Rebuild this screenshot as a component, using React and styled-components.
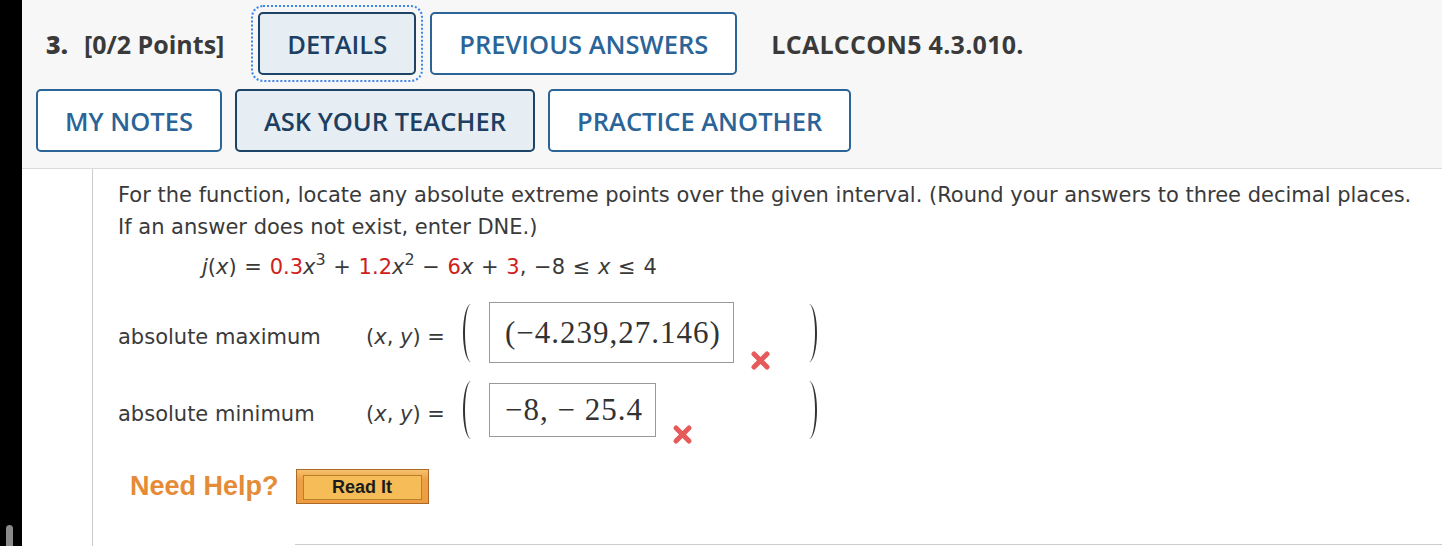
import React from "react";
import styled, { createGlobalStyle } from "styled-components";

const GlobalStyle = createGlobalStyle`
  html, body {
    margin: 0;
    padding: 0;
    height: 546px;
    overflow: hidden;
    background: #fff;
  }
`;

const Page = styled.div`
  display: flex;
  height: 546px;
`;

const Strip = styled.div`
  width: 22px;
  flex-shrink: 0;
  background: #000;
  display: flex;
  flex-direction: column;
  justify-content: flex-end;
`;

const Thumb = styled.div`
  width: 7px;
  height: 21px;
  margin-left: 6px;
  border-radius: 4px 4px 0 0;
  background: #8a8a8a;
`;

const Main = styled.div`
  flex: 1;
  display: flex;
  flex-direction: column;
  min-width: 0;
`;

const Header = styled.div`
  background: #f7f7f7;
  border-bottom: 1px solid #dcdcdc;
  padding: 12px 0 16px 14px;
  font-family: "Open Sans", "Liberation Sans", sans-serif;
`;

const Row = styled.div`
  display: flex;
  align-items: center;
  gap: ${(p) => p.$gap || 13}px;
  margin-top: ${(p) => p.$top || 0}px;
  padding-left: ${(p) => p.$indent || 0}px;
`;

const Title = styled.span`
  font-size: 25px;
  font-weight: 700;
  color: #3a3a3a;
  white-space: pre;
  letter-spacing: ${(p) => p.$spacing || 0}px;
  margin-right: ${(p) => p.$after || 0}px;
  margin-left: ${(p) => p.$before || 0}px;
  b {
    margin-right: 16px;
  }
`;

const Button = styled.button`
  height: 63px;
  padding: 0 27px;
  border: 2px solid ${(p) => (p.$active ? "#1d4366" : "#2b6497")};
  border-radius: 5px;
  background: ${(p) => (p.$active ? "#e7eef3" : "#fff")};
  color: ${(p) => (p.$active ? "#1c3f62" : "#2b6497")};
  font-family: "Open Sans", "Liberation Sans", sans-serif;
  font-size: 25.5px;
  font-weight: 600;
  cursor: pointer;
  outline: ${(p) => (p.$focus ? "2px dotted #3b86ea" : "none")};
  outline-offset: 5px;
`;

const Body = styled.div`
  flex: 1;
  display: flex;
`;

const Gutter = styled.div`
  width: 70px;
  flex-shrink: 0;
`;

const Question = styled.div`
  flex: 1;
  border-left: 1px solid #cccccc;
  padding: 10px 0 0 25px;
  font-family: Verdana, "DejaVu Sans", sans-serif;
  font-size: 21px;
  color: #3a3a3a;
  display: flex;
  flex-direction: column;
`;

const Prompt = styled.p`
  margin: 0;
  line-height: 32px;
`;

const Equation = styled.div`
  margin: 11px 0 0 84px;
  line-height: 26px;
  word-spacing: 1px;
  sup {
    font-size: 16px;
    vertical-align: 9px;
    line-height: 0;
  }
`;

const Coef = styled.span`
  color: #d0201c;
`;

const Answers = styled.div`
  display: grid;
  grid-template-columns: 248px 97px 26px max-content auto;
  align-items: center;
  row-gap: 18px;
  margin-top: 22px;
`;

const Label = styled.span`
  margin-top: 8px;
`;

const Paren = styled.div`
  width: 14px;
  height: 58px;
  border-${(p) => (p.$close ? "right" : "left")}: 2px solid #333;
  border-radius: 50%;
  margin-left: ${(p) => (p.$close ? 30 : 0)}px;
`;

const AnswerCell = styled.div`
  display: flex;
  align-items: flex-end;
  gap: 16px;
`;

const MathBox = styled.div`
  height: ${(p) => p.$h}px;
  box-sizing: border-box;
  border: 1px solid #999;
  padding: 0 12px 0 15px;
  display: flex;
  align-items: center;
  font-family: "Liberation Serif", "DejaVu Serif", serif;
  font-size: 31px;
  letter-spacing: 1px;
  color: #333;
  background: #fff;
`;

const Cross = styled.svg`
  width: 21px;
  height: 21px;
  margin-bottom: -8px;
  flex-shrink: 0;
`;

const HelpRow = styled.div`
  display: flex;
  align-items: center;
  gap: 17px;
  margin: 30px 0 0 12px;
`;

const HelpText = styled.span`
  font-family: "Liberation Sans", Arial, sans-serif;
  font-weight: 700;
  font-size: 27px;
  color: #e58b36;
`;

const ReadIt = styled.button`
  width: 133px;
  height: 35px;
  padding: 5px 6px;
  border: 1px solid #a8692a;
  background: linear-gradient(#f6c26b, #eea046 30%, #ee9c3e);
  cursor: pointer;
  span {
    display: flex;
    align-items: center;
    justify-content: center;
    height: 100%;
    border: 1px solid #b6812f;
    background: #f5bc57;
    font-family: "Liberation Sans", Arial, sans-serif;
    font-weight: 700;
    font-size: 18px;
    color: #1c1c1c;
  }
`;

const Notes = styled.div`
  margin: 40px 0 0 177px;
  flex: 1;
  border-top: 1px solid #cccccc;
`;

const XMark = () => (
  <Cross viewBox="0 0 21 21">
    <path
      d="M4 4 L17 17 M17 4 L4 17"
      stroke="#e65a5a"
      strokeWidth="5"
      strokeLinecap="round"
    />
  </Cross>
);

const rows = [
  { label: "absolute maximum", value: "(−4.239,27.146)", h: 61 },
  { label: "absolute minimum", value: "−8, − 25.4", h: 54 },
];

export default function App() {
  return (
    <>
      <GlobalStyle />
      <Page>
        <Strip>
          <Thumb />
        </Strip>
        <Main>
          <Header>
            <Row $gap={14} $indent={10}>
              <Title $after={20}>
                <b>3.</b>[0/2 Points]
              </Title>
              <Button $active $focus>DETAILS</Button>
              <Button>PREVIOUS ANSWERS</Button>
              <Title $before={20} $spacing={0.3}>
                LCALCCON5 4.3.010.
              </Title>
            </Row>
            <Row $top={14}>
              <Button>MY NOTES</Button>
              <Button $active>ASK YOUR TEACHER</Button>
              <Button>PRACTICE ANOTHER</Button>
            </Row>
          </Header>
          <Body>
            <Gutter />
            <Question>
              <Prompt>
                For the function, locate any absolute extreme points over the
                given interval. (Round your answers to three decimal places.
                <br />
                If an answer does not exist, enter DNE.)
              </Prompt>
              <Equation>
                <i>j</i>(<i>x</i>) = <Coef>0.3</Coef>
                <i>x</i>
                <sup>3</sup> + <Coef>1.2</Coef>
                <i>x</i>
                <sup>2</sup> − <Coef>6</Coef>
                <i>x</i> + <Coef>3</Coef>, −8 ≤ <i>x</i> ≤ 4
              </Equation>
              <Answers>
                {rows.map((r) => (
                  <React.Fragment key={r.label}>
                    <Label>{r.label}</Label>
                    <Label>
                      (<i>x</i>, <i>y</i>) =
                    </Label>
                    <Paren />
                    <AnswerCell>
                      <MathBox $h={r.h}>{r.value}</MathBox>
                      <XMark />
                    </AnswerCell>
                    <Paren $close />
                  </React.Fragment>
                ))}
              </Answers>
              <HelpRow>
                <HelpText>Need Help?</HelpText>
                <ReadIt>
                  <span>Read It</span>
                </ReadIt>
              </HelpRow>
              <Notes />
            </Question>
          </Body>
        </Main>
      </Page>
    </>
  );
}
